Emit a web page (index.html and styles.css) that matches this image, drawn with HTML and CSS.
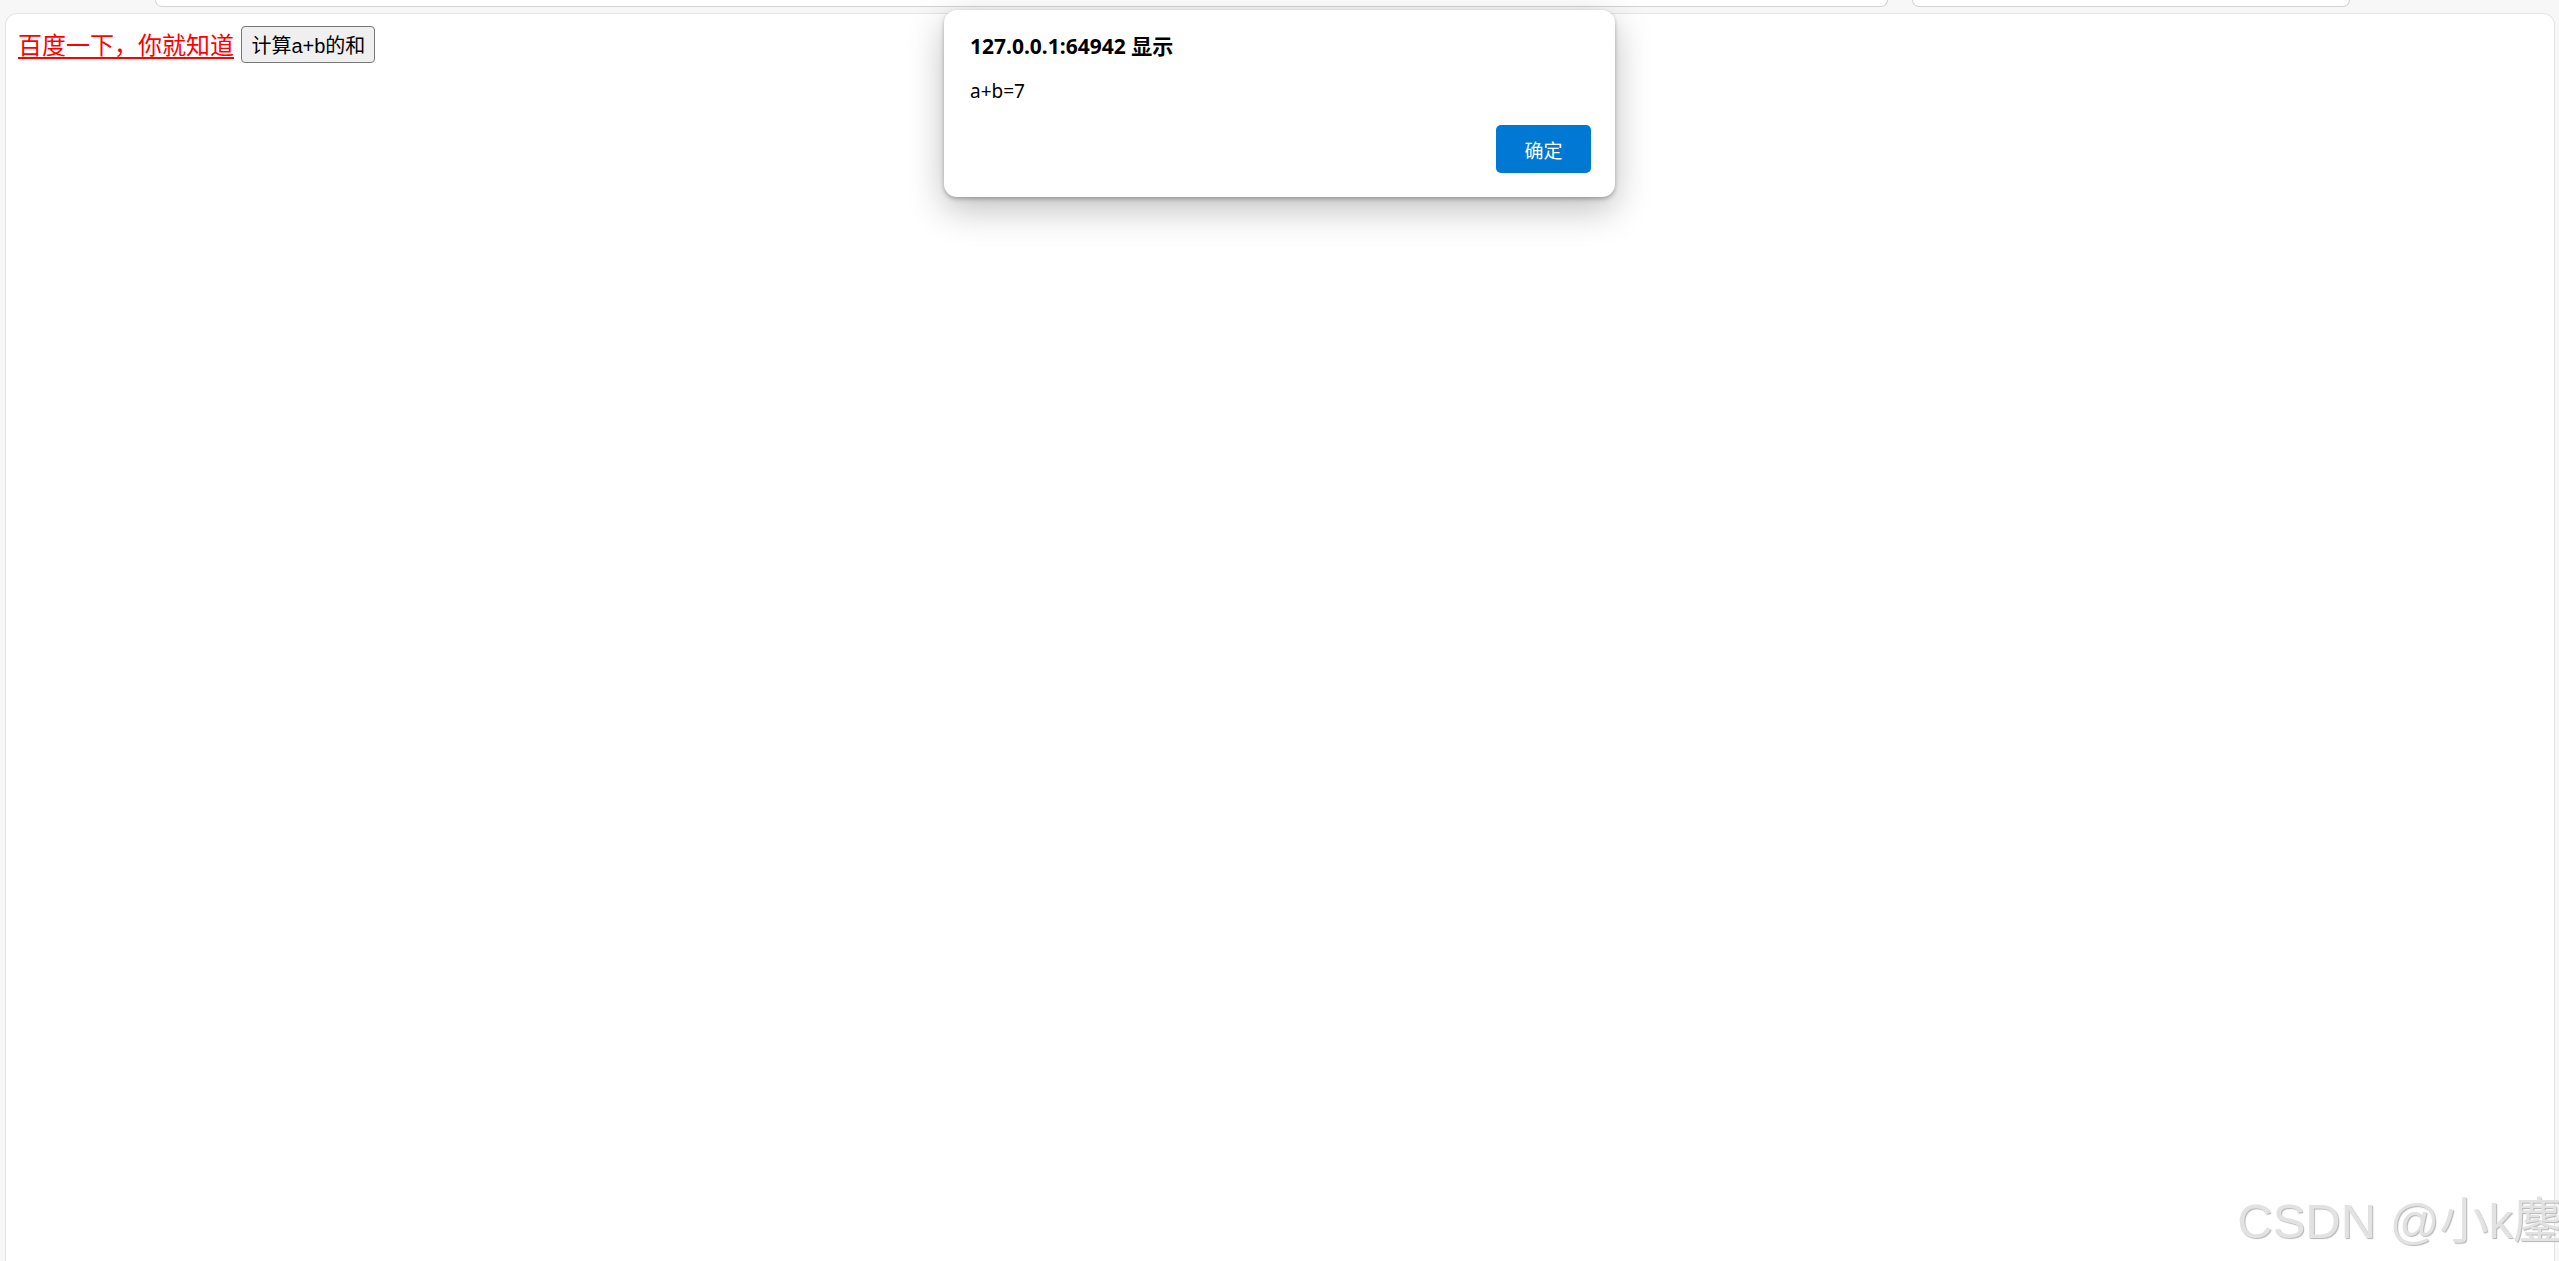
FILE: index.html
```html
<!DOCTYPE html>
<html lang="zh-CN">
<head>
  <meta charset="UTF-8" />
  <title>alert</title>
  <link rel="stylesheet" href="styles.css">
</head>
<body>

  <div class="chrome">
    <div class="bar bar-address"></div>
    <div class="bar bar-search"></div>
  </div>

  <div class="page">
    <a href="#" class="baidu-link">百度一下，你就知道</a>
    <button class="sum-btn" id="sumBtn">计算a+b的和</button>
    <div class="watermark">CSDN @小k鏖</div>
  </div>

  <div class="alert-box">
    <div class="alert-title">127.0.0.1:64942 显示</div>
    <div class="alert-msg">a+b=7</div>
    <div class="alert-actions">
      <button class="btn-ok">确定</button>
    </div>
  </div>

</body>
</html>
```

FILE: styles.css
```css
html, body {
  margin: 0;
  height: 100%;
}
body {
  background: #f7f7f7;
  position: relative;
  overflow: hidden;
  font-family: "Noto Sans", "Noto Sans CJK SC", sans-serif;
}
.chrome {
  height: 13px;
  display: flex;
  gap: 24px;
  padding-left: 155px;
}
.bar {
  height: 6px;
  background: #fff;
  border: 1px solid #d3d3d3;
  border-top: none;
  border-radius: 0 0 14px 14px;
}
.bar-address { width: 1731px; }
.bar-search { width: 436px; }

.page {
  position: relative;
  margin: 0 4px 0 5px;
  height: 1248px;
  box-sizing: border-box;
  padding: 12px;
  background: #fff;
  border: 1px solid #e4e4e4;
  border-bottom: none;
  border-radius: 12px 12px 0 0;
  font-family: "Noto Sans CJK SC", sans-serif;
  font-size: 24px;
  line-height: 36px;
}
.baidu-link {
  color: #ff0000;
  text-decoration: underline;
  text-underline-offset: 3px;
  text-decoration-thickness: 2px;
}
.sum-btn {
  font-family: "Liberation Sans", "Noto Sans CJK SC", sans-serif;
  font-size: 20px;
  height: 37px;
  padding: 0 9px;
  margin-left: 2px;
  background: #efefef;
  color: #000;
  border: 1.5px solid #767676;
  border-radius: 4px;
  vertical-align: top;
}
.watermark {
  position: absolute;
  right: -8px;
  bottom: 10px;
  font-family: "Liberation Sans", "Noto Sans CJK SC", sans-serif;
  font-size: 49px;
  line-height: 60px;
  color: #e2e2e2;
  text-shadow: 1px 1px 1px #b5b5b5;
  white-space: nowrap;
}

.alert-box {
  position: absolute;
  left: 944px;
  top: 10px;
  width: 671px;
  height: 187px;
  box-sizing: border-box;
  padding: 22px 24px 24px 26px;
  background: #fff;
  border-radius: 13px;
  box-shadow: 0 2px 4px rgba(0,0,0,0.28), 0 12px 36px rgba(0,0,0,0.26);
  display: flex;
  flex-direction: column;
}
.alert-title {
  font-size: 21px;
  font-weight: bold;
  line-height: 28px;
  color: #000;
}
.alert-msg {
  margin-top: 17px;
  font-size: 19px;
  line-height: 28px;
  color: #000;
}
.alert-actions {
  margin-top: auto;
  display: flex;
  justify-content: flex-end;
}
.btn-ok {
  width: 95px;
  height: 48px;
  background: #0078d4;
  color: #fff;
  border: none;
  border-radius: 5px;
  font-family: "Noto Sans CJK SC", sans-serif;
  font-size: 19px;
}
```
